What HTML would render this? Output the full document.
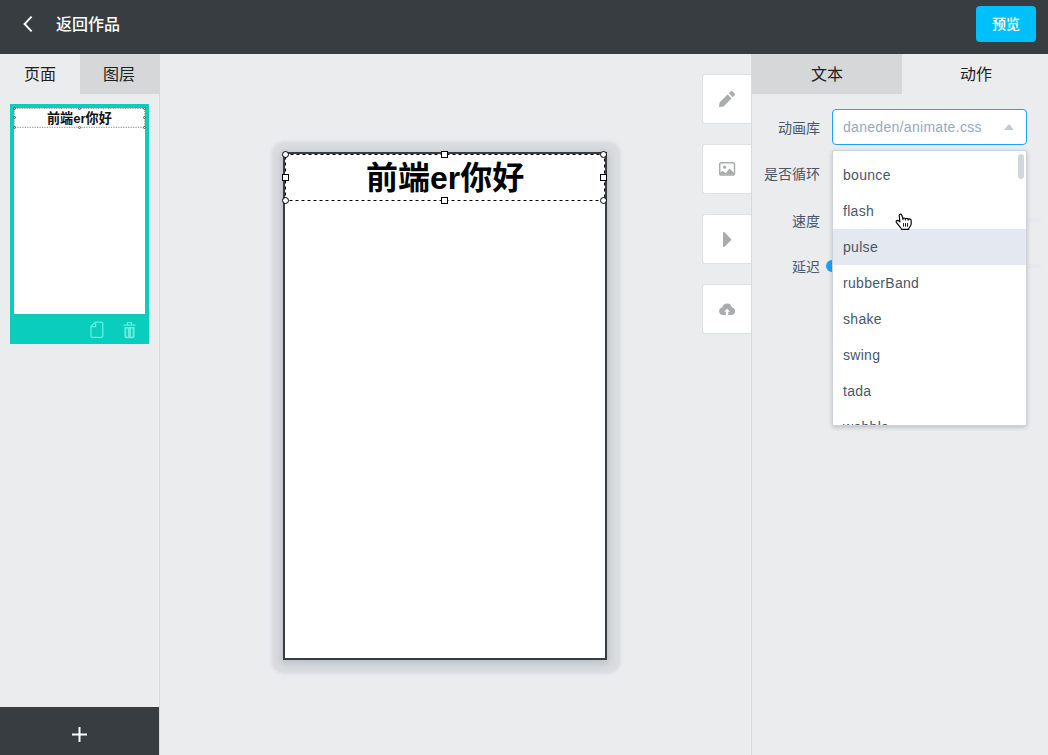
<!DOCTYPE html>
<html><head><meta charset="utf-8"><title>editor</title>
<style>
*{box-sizing:border-box;margin:0;padding:0}
html,body{width:1048px;height:755px;overflow:hidden}
body{background:#ebecee;font-family:"Liberation Sans",sans-serif;position:relative}
.abs{position:absolute}
#hdr{left:0;top:0;width:1048px;height:54px;background:#373d41}
#btn{left:976px;top:6px;width:60px;height:36px;background:#00c0fb;border-radius:4px}
#side{left:0;top:54px;width:160px;height:701px;border-right:1px solid #d9dadc}
#tab2{left:80px;top:54px;width:80px;height:40px;background:#d6d7d9}
#thumb{left:10px;top:104px;width:139px;height:240px;background:#0acdbe}
#thumbin{left:14px;top:108px;width:131px;height:206px;background:#fff}
#add{left:0;top:707px;width:159px;height:48px;background:#373d41}
#phoneshadow{left:273px;top:143px;width:346px;height:529px;border-radius:12px;background:#dadde0;box-shadow:0 0 3px 1.5px #dadde0}
#phone{left:283px;top:152px;width:324px;height:508px;background:#fff;border:2px solid #373d41;box-shadow:0 1.5px 7px 2px rgba(45,55,65,.18)}
#sel{left:285px;top:154px;width:320px;height:47px}
.h{position:absolute;width:7px;height:7px;background:#fff;border:1px solid #000}
.c{border-radius:50%}
.tool{position:absolute;left:702px;width:50px;height:50px;background:#fff;border:1px solid #dfe0e2;border-right:none;border-radius:3px 0 0 3px}
#rp{left:751px;top:54px;width:297px;height:701px;border-left:1px solid #d9dadc}
#rtab1{left:752px;top:54px;width:150px;height:40px;background:#d6d7d9}
#inp{left:832px;top:109px;width:195px;height:36px;border:1px solid #20a0ff;border-radius:4px;background:#fff;color:#97a8be;font-size:14px;line-height:34px;padding-left:10px;letter-spacing:.3px}
#dd{left:832px;top:150px;width:195px;height:276px;border:1px solid #ccd2da;border-radius:2px;background:#fff;box-shadow:0 2px 4px rgba(0,0,0,.14),0 0 6px rgba(0,0,0,.05);overflow:hidden}
.it{position:absolute;left:0;width:193px;height:36px;line-height:36px;padding-left:10px;font-size:14px;letter-spacing:.3px;color:#48576a}
.hov{background:#e4e8f1}
#thumbsb{left:1018px;top:154px;width:6px;height:25px;border-radius:3px;background:#d3d6db}
.trk{position:absolute;left:1028px;width:13px;height:4px;background:#e5e8ee;border-radius:0 2px 2px 0}
#dot{left:826px;top:260px;width:12px;height:12px;border-radius:50%;background:#20a0ff}
svg text{font-family:"Liberation Sans","Noto Sans CJK SC",sans-serif}
</style></head><body>
<div id="hdr" class="abs"></div>
<svg class="abs" style="left:20px;top:13px" width="16" height="22" viewBox="0 0 16 22"><path d="M11.6 3.6 L4.6 11 L11.6 18.4" fill="none" stroke="#fff" stroke-width="2"/></svg>

<svg style="position:absolute;left:56.00px;top:14.10px;overflow:visible" width="66.00" height="19.20"><text x="0" y="15.68" font-size="16" font-weight="500" fill="#fff">返回作品</text></svg>
<div id="btn" class="abs"></div>
<svg style="position:absolute;left:992.00px;top:14.90px;overflow:visible" width="30.00" height="16.80"><text x="0" y="13.72" font-size="14" font-weight="500" fill="#fff">预览</text></svg>
<div id="side" class="abs"></div><div id="tab2" class="abs"></div>
<svg style="position:absolute;left:23.50px;top:64.00px;overflow:visible" width="34.00" height="19.20"><text x="0" y="15.68" font-size="16" fill="#1f2022">页面</text></svg>
<svg style="position:absolute;left:103.20px;top:63.80px;overflow:visible" width="34.00" height="19.20"><text x="0" y="15.68" font-size="16" fill="#1f2022">图层</text></svg>
<div id="thumb" class="abs"></div><div id="thumbin" class="abs"></div>
<svg class="abs" style="left:14px;top:108px" width="131" height="20"><rect x=".3" y=".3" width="130.4" height="19" fill="none" stroke="#333" stroke-width=".6" stroke-dasharray="1.23 1.23"/></svg>
<div class="abs" style="left:13.0px;top:107.0px;width:3px;height:3px;border-radius:50%;background:#fff;border:.5px solid #555"></div>
<div class="abs" style="left:78.0px;top:107.0px;width:3px;height:3px;border-radius:50%;background:#fff;border:.5px solid #555"></div>
<div class="abs" style="left:143.0px;top:107.0px;width:3px;height:3px;border-radius:50%;background:#fff;border:.5px solid #555"></div>
<div class="abs" style="left:13.0px;top:116.2px;width:3px;height:3px;border-radius:50%;background:#fff;border:.5px solid #555"></div>
<div class="abs" style="left:143.0px;top:116.2px;width:3px;height:3px;border-radius:50%;background:#fff;border:.5px solid #555"></div>
<div class="abs" style="left:13.0px;top:125.5px;width:3px;height:3px;border-radius:50%;background:#fff;border:.5px solid #555"></div>
<div class="abs" style="left:78.0px;top:125.5px;width:3px;height:3px;border-radius:50%;background:#fff;border:.5px solid #555"></div>
<div class="abs" style="left:143.0px;top:125.5px;width:3px;height:3px;border-radius:50%;background:#fff;border:.5px solid #555"></div>
<svg style="position:absolute;left:47.01px;top:110.30px;overflow:visible" width="66.78" height="15.72"><text x="0" y="12.84" font-size="13.1" font-weight="bold" fill="#111">前端er你好</text></svg>
<svg class="abs" style="left:89px;top:320px" width="16" height="20" viewBox="0 0 16 20"><path d="M6.3 2.1 H12.6 a1.2 1.2 0 0 1 1.2 1.2 V16.1 a1.2 1.2 0 0 1 -1.2 1.2 H3.2 a1.2 1.2 0 0 1 -1.2 -1.2 V6.4 Z M6.6 2.4 V6.7 H2.3" fill="none" stroke="#63efdd" stroke-width="1.3" stroke-linejoin="round"/></svg>
<svg class="abs" style="left:122px;top:320px" width="16" height="20" viewBox="0 0 16 20"><path d="M1.4 5.2 H13.6 M5.5 5 V2.5 H9.5 V5" fill="none" stroke="#63efdd" stroke-width="1.2"/><path d="M2.4 7 H12.6 V16.3 a2 2 0 0 1 -2 2 H4.4 a2 2 0 0 1 -2 -2 Z M4.3 8.6 V16.6 H5.9 V8.6 Z M9.1 8.6 V16.6 H10.7 V8.6 Z" fill="#63efdd" fill-rule="evenodd"/></svg>

<div id="add" class="abs"></div>
<svg class="abs" style="left:71px;top:725.6px" width="17" height="17" viewBox="0 0 17 17"><path d="M8.5 1 V16 M1 8.5 H16" stroke="#fff" stroke-width="2" fill="none"/></svg>
<div id="phoneshadow" class="abs"></div><div id="phone" class="abs"></div><svg id="sel" class="abs" width="320" height="47"><rect x=".5" y=".5" width="319" height="46" fill="none" stroke="#000" stroke-width="1" stroke-dasharray="3 3" stroke-dashoffset="1"/></svg>
<svg style="position:absolute;left:365.88px;top:158.00px;overflow:visible" width="160.25" height="38.40"><text x="0" y="31.36" font-size="32" font-weight="bold" fill="#000">前端er你好</text></svg>
<div class="h c" style="left:282px;top:151px"></div>
<div class="h" style="left:441px;top:151px"></div>
<div class="h c" style="left:600px;top:151px"></div>
<div class="h" style="left:282px;top:174px"></div>
<div class="h" style="left:600px;top:174px"></div>
<div class="h c" style="left:282px;top:197px"></div>
<div class="h" style="left:441px;top:197px"></div>
<div class="h c" style="left:600px;top:197px"></div>
<div class="tool" style="top:74px"></div>
<div class="tool" style="top:144px"></div>
<div class="tool" style="top:214px"></div>
<div class="tool" style="top:284px"></div>
<svg class="abs" style="left:702px;top:74px;overflow:visible" width="50" height="260">
<g transform="translate(17 33) rotate(-45)" fill="#a9acac"><path d="M0 0 L3.6 -2.75 H14.9 V2.75 H3.6 Z M16.7 -2.75 H19.7 a.9 .9 0 0 1 .9 .9 V1.85 a.9 .9 0 0 1 -.9 .9 H16.7 Z"/></g>
<rect x="17.7" y="88.85" width="14.8" height="12.25" rx="1.8" fill="none" stroke="#a9acac" stroke-width="1.5"/>
<circle cx="22.6" cy="93.2" r="1.6" fill="#a9acac"/>
<path d="M18.2 98.6 L20.5 96.9 L23.9 99.2 L27.5 94.2 L32 99 V100.6 H18.2 Z" fill="#a9acac"/>
</svg>
<svg class="abs" style="left:722.9px;top:231.9px;overflow:visible" width="8.3" height="15.1"><path fill="#a9acac" d="M8.3 7.55C8.3 7.3 8.2 7.06 8.03 6.89L1.57 0.28C1.4 0.1 1.17 0 0.92 0C0.42 0 0 0.43 0 0.94V14.16C0 14.67 0.42 15.1 0.92 15.1C1.17 15.1 1.4 15 1.57 14.82L8.03 8.21C8.2 8.04 8.3 7.8 8.3 7.55Z"/></svg>
<svg class="abs" style="left:702px;top:284px;overflow:visible" width="50" height="50">
<path fill="#a9acac" fill-rule="evenodd" d="M20.9 30.9 a3.75 3.75 0 0 1 -0.6 -7.45 a4.9 4.9 0 0 1 9.6 0 a3.75 3.75 0 0 1 -0.6 7.45 H26.3 V27.8 H27.9 L25.1 24.4 L22.3 27.8 H23.9 V30.9 Z"/>
</svg>
<div id="rp" class="abs"></div><div id="rtab1" class="abs"></div>
<svg style="position:absolute;left:810.70px;top:64.00px;overflow:visible" width="34.00" height="19.20"><text x="0" y="15.68" font-size="16" fill="#1f2022">文本</text></svg>
<svg style="position:absolute;left:959.50px;top:64.00px;overflow:visible" width="34.00" height="19.20"><text x="0" y="15.68" font-size="16" fill="#1f2022">动作</text></svg>
<svg style="position:absolute;left:778.00px;top:118.80px;overflow:visible" width="44.00" height="16.80"><text x="0" y="13.72" font-size="14" fill="#48576a">动画库</text></svg>
<svg style="position:absolute;left:764.00px;top:164.80px;overflow:visible" width="58.00" height="16.80"><text x="0" y="13.72" font-size="14" fill="#48576a">是否循环</text></svg>
<svg style="position:absolute;left:792.00px;top:211.80px;overflow:visible" width="30.00" height="16.80"><text x="0" y="13.72" font-size="14" fill="#48576a">速度</text></svg>
<svg style="position:absolute;left:792.00px;top:257.80px;overflow:visible" width="30.00" height="16.80"><text x="0" y="13.72" font-size="14" fill="#48576a">延迟</text></svg>
<div class="trk" style="top:218px"></div><div class="trk" style="top:264px"></div>
<div id="dot" class="abs"></div>
<div id="inp" class="abs">daneden/animate.css</div>
<svg class="abs" style="left:1003px;top:123px" width="12" height="8" viewBox="0 0 12 8"><path d="M6 1 L11 7 H1 Z" fill="#bfcbd9"/></svg>
<div id="dd" class="abs">
<div class="it" style="top:6px">bounce</div>
<div class="it" style="top:42px">flash</div>
<div class="it hov" style="top:78px">pulse</div>
<div class="it" style="top:114px">rubberBand</div>
<div class="it" style="top:150px">shake</div>
<div class="it" style="top:186px">swing</div>
<div class="it" style="top:222px">tada</div>
<div class="it" style="top:258px">wobble</div>
</div><div id="thumbsb" class="abs"></div>
<svg class="abs" style="left:890px;top:206px" width="30" height="30" viewBox="0 0 30 30"><path d="M9.9 15.9 L9.25 9.7 C9.15 8.5 9.8 8.15 10.4 8.15 C11.2 8.15 11.7 8.7 11.95 9.5 L12.95 12.5 Q14.2 11.4 15.35 12.7 Q16.8 11.7 18.1 13.1 Q19.7 12.5 21.1 13.9 L21.25 17.5 C21.2 19.6 19.6 20.9 18.9 22.3 L18.7 23.4 H11.7 L10.9 22.2 L6.4 16.3 C5.7 15.3 6.5 14.35 7.9 14.35 C8.7 14.45 9.3 15.2 9.9 15.9 Z" fill="#fff" stroke="#000" stroke-width="1.15" stroke-linejoin="round"/><path d="M15.35 12.6 V14.5 M18.1 13 V14.7 M12.95 12.3 V14.2" stroke="#000" stroke-width="1" fill="none"/><path d="M13.5 17.1 V20.7 M15.5 17.1 V20.7 M17.5 17.1 V20.7" stroke="#000" stroke-width="0.9" fill="none"/></svg>
</body></html>
